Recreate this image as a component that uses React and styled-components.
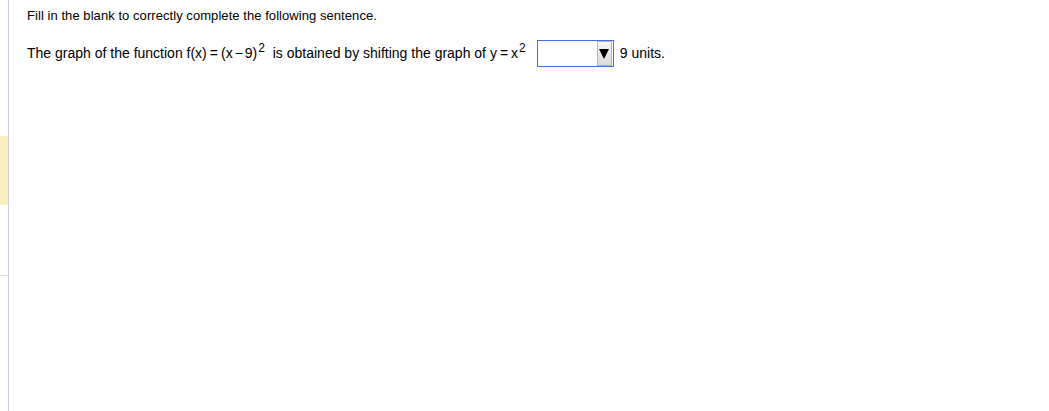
import React from "react";
import styled, { createGlobalStyle } from "styled-components";

const Global = createGlobalStyle`
  html, body { margin: 0; padding: 0; background: #fff; }
  body { font-family: Arial, "Liberation Sans", sans-serif; color: #000; }
`;

const Page = styled.div`
  display: flex;
  min-height: 411px;
`;

const Rail = styled.div`
  width: 8px;
  flex: none;
  border-right: 1px solid #c6cbe0;
  display: flex;
  flex-direction: column;
`;

const Marker = styled.div`
  margin-top: 136px;
  height: 69px;
  background: #faedc0;
`;

const Divider = styled.div`
  margin-top: 70px;
  height: 1px;
  background: #e2e2e2;
`;

const Content = styled.div`
  flex: 1;
  padding: 8px 0 0 18px;
`;

const Prompt = styled.p`
  margin: 0;
  font-size: 13px;
  line-height: 16px;
  letter-spacing: 0.06px;
`;

const Sentence = styled.div`
  display: flex;
  align-items: center;
  margin-top: 16px;
  font-size: 14px;
  line-height: 17px;
  white-space: nowrap;
`;

const Math = styled.span`
  display: inline-flex;
  align-items: baseline;
`;

const Op = styled.span`
  margin: 0 ${(p) => p.$gap ?? 2}px;
`;

const Sup = styled.span`
  font-size: 12px;
  position: relative;
  top: -6px;
  margin-left: 1px;
`;

const Select = styled.div`
  margin-left: 11px;
  width: 74px;
  height: 25px;
  border: 1px solid #3c76d4;
  display: flex;
  justify-content: flex-end;
  align-items: center;
  padding-right: 1px;
  box-sizing: content-box;
`;

const Arrow = styled.div`
  width: 13px;
  height: 23px;
  border: 1px solid #b4b4b4;
  background: linear-gradient(#f6f6f6, #dadada);
  display: flex;
  align-items: center;
  justify-content: center;
`;

const Tail = styled.span`
  margin-left: 6px;
`;

export default function App() {
  return (
    <>
      <Global />
      <Page>
        <Rail>
          <Marker />
          <Divider />
        </Rail>
        <Content>
          <Prompt>Fill in the blank to correctly complete the following sentence.</Prompt>
          <Sentence>
            <span>The graph of the function&nbsp;</span>
            <Math>
              f(x)<Op $gap={3}>=</Op>(x<Op $gap={2}>−</Op>9)<Sup>2</Sup>
            </Math>
            <span>&nbsp; is obtained by shifting the graph of&nbsp;</span>
            <Math>
              y<Op $gap={3}>=</Op>x<Sup>2</Sup>
            </Math>
            <Select>
              <Arrow>
                <svg width="10" height="10" viewBox="0 0 10 10">
                  <path d="M0 0 H10 L5 10 Z" fill="#000" />
                </svg>
              </Arrow>
            </Select>
            <Tail>9 units.</Tail>
          </Sentence>
        </Content>
      </Page>
    </>
  );
}
